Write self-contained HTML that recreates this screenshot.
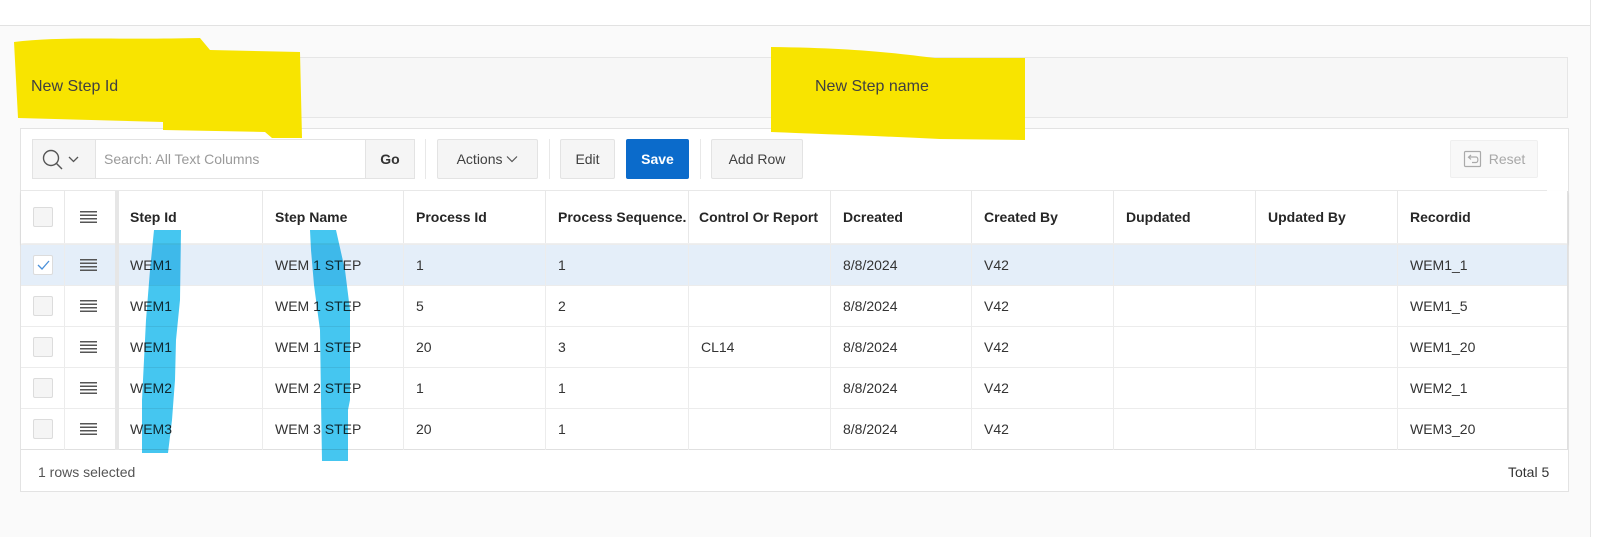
<!DOCTYPE html>
<html><head><meta charset="utf-8"><style>
*{box-sizing:border-box;margin:0;padding:0}
body{width:1600px;height:537px;background:#fafafa;font-family:"Liberation Sans",sans-serif;font-size:14px;color:#262626;position:relative;overflow:hidden}
.a{position:absolute}
.btn{position:absolute;top:139px;height:40px;border:1px solid #e3e3e3;background:#f5f5f5;border-radius:2px;display:flex;align-items:center;justify-content:center;font-size:14px;color:#404040}
.hd{position:absolute;top:191px;height:52px;font-weight:bold;font-size:14px;line-height:52px;color:#262626;padding-left:12px;border-left:1px solid #e8e8e8;white-space:nowrap;overflow:hidden}
.row{position:absolute;left:21px;width:1547px;height:41px;border-top:1px solid #ececec}
.c{position:absolute;top:0;height:41px;line-height:41px;padding-left:12px;border-left:1px solid #ececec;font-size:14px;color:#333}
.cb{position:absolute;left:12px;top:10px;width:20px;height:20px;border:1px solid #dcdcdc;border-radius:2px;background:#f5f5f5}
.ham{position:absolute;left:59px;top:14px;width:17px;height:12px;background:repeating-linear-gradient(#555 0 1.5px,transparent 1.5px 3.5px)}
</style></head><body>
<div class="a" style="left:0;top:0;width:1600px;height:26px;background:#fff;border-bottom:1px solid #e2e2e2"></div>
<div class="a" style="left:1590px;top:0;width:10px;height:537px;background:#fff;border-left:1px solid #e6e6e6"></div>

<div class="a" style="left:20px;top:57px;width:1548px;height:61px;border:1px solid #e6e6e6;background:#f7f7f7"></div>
<div class="a" style="left:20px;top:128px;width:1549px;height:364px;border:1px solid #e3e3e3;background:#fff"></div>

<svg class="a" style="left:0;top:0" width="1600" height="537">
<path d="M14 42 C60 36 120 40 200 38 L210 50 L300 52 L302 138 L272 138 L265 132 L163 130 L163 122 L18 118 Z" fill="#f8e400"/>
<path d="M771 47 C860 48 900 54 935 58 L1025 58 L1025 140 L940 139 C880 136 820 134 771 132 Z" fill="#f8e400"/>
</svg>
<div class="a" style="left:31px;top:78px;font-size:16px;color:#404040">New Step Id</div>
<div class="a" style="left:815px;top:78px;font-size:16px;color:#404040">New Step name</div>

<div class="a" style="left:32px;top:139px;width:383px;height:40px;border:1px solid #e3e3e3;background:#fff;border-radius:2px"></div>
<div class="a" style="left:32px;top:139px;width:64px;height:40px;background:#f5f5f5;border:1px solid #e3e3e3"></div>
<svg class="a" style="left:40px;top:148px" width="50" height="24"><circle cx="11" cy="10" r="7.5" fill="none" stroke="#555" stroke-width="1.4"/><path d="M16.5 15.5 L22 21" stroke="#555" stroke-width="1.4"/><path d="M29 9 L33.5 13.5 L38 9" fill="none" stroke="#555" stroke-width="1.3"/></svg>
<div class="a" style="left:104px;top:151px;font-size:14px;color:#9a9a9a">Search: All Text Columns</div>
<div class="a" style="left:365px;top:139px;width:50px;height:40px;background:#f5f5f5;border:1px solid #e3e3e3;font-weight:bold;font-size:14px;line-height:38px;text-align:center;color:#333">Go</div>
<div class="a" style="left:425px;top:139px;width:1px;height:40px;background:#e8e8e8"></div>
<div class="btn" style="left:437px;width:101px">Actions&nbsp;<svg width="12" height="8"><path d="M1 1.5 L6 6.5 L11 1.5" fill="none" stroke="#555" stroke-width="1.2"/></svg></div>
<div class="a" style="left:549px;top:139px;width:1px;height:40px;background:#e8e8e8"></div>
<div class="btn" style="left:560px;width:55px">Edit</div>
<div class="btn" style="left:626px;width:63px;background:#0b6bcb;border-color:#0b6bcb;color:#fff;font-weight:bold">Save</div>
<div class="a" style="left:700px;top:139px;width:1px;height:40px;background:#e8e8e8"></div>
<div class="btn" style="left:711px;width:92px">Add Row</div>
<div class="btn" style="left:1450px;width:88px;top:140px;height:38px;background:#f8f8f8;border-color:#efefef;color:#a8a8a8"><svg width="20" height="18" style="margin-right:6px"><rect x="1.5" y="1.5" width="16" height="15" rx="1" fill="none" stroke="#aaa" stroke-width="1.2"/><path d="M6 7 L13 7 C15.5 7 15.5 12.5 13 12.5 L9 12.5 M8 5 L5.5 7.2 L8 9.4" fill="none" stroke="#aaa" stroke-width="1.2"/></svg>Reset</div>

<div class="a" style="left:21px;top:190px;width:1526px;height:1px;background:#e8e8e8"></div>
<div class="a" style="left:21px;top:191px;width:1547px;height:52px;background:#fff;box-shadow:0 2px 3px rgba(0,0,0,.08)"></div>
<div class="a" style="left:33px;top:207px;width:20px;height:20px;border:1px solid #dcdcdc;border-radius:2px;background:#f5f5f5"></div>
<div class="a" style="left:64px;top:191px;width:1px;height:52px;background:#e8e8e8"></div>
<div class="a" style="left:80px;top:211px;width:17px;height:12px;background:repeating-linear-gradient(#555 0 1.5px,transparent 1.5px 3.5px)"></div>
<div class="hd" style="left:118px;width:144px;border-left:none">Step Id</div>
<div class="hd" style="left:262px;width:141px">Step Name</div>
<div class="hd" style="left:403px;width:142px">Process Id</div>
<div class="hd" style="left:545px;width:143px">Process Sequence.</div>
<div class="hd" style="left:688px;width:142px;padding-left:10px">Control Or Report</div>
<div class="hd" style="left:830px;width:141px">Dcreated</div>
<div class="hd" style="left:971px;width:142px">Created By</div>
<div class="hd" style="left:1113px;width:142px">Dupdated</div>
<div class="hd" style="left:1255px;width:142px">Updated By</div>
<div class="hd" style="left:1397px;width:171px">Recordid</div>

<div class="row" style="top:244px;background:#e4eef9">
<div class="cb" style="background:#fff"><svg width="18" height="18" style="position:absolute;left:0;top:0"><path d="M4 9 L8 13 L15 5" fill="none" stroke="#4a90d9" stroke-width="1.3"/></svg></div><div class="ham"></div>
<div class="c" style="left:43px;width:52px;padding:0"></div>
<div class="c" style="left:97px;width:144px;border-left:none">WEM1</div><div class="c" style="left:241px;width:141px">WEM 1 STEP</div><div class="c" style="left:382px;width:142px">1</div><div class="c" style="left:524px;width:143px">1</div><div class="c" style="left:667px;width:142px"></div><div class="c" style="left:809px;width:141px">8/8/2024</div><div class="c" style="left:950px;width:142px">V42</div><div class="c" style="left:1092px;width:142px"></div><div class="c" style="left:1234px;width:142px"></div><div class="c" style="left:1376px;width:171px">WEM1_1</div></div>
<div class="row" style="top:285px"><div class="cb"></div><div class="ham"></div><div class="c" style="left:43px;width:52px;padding:0"></div>
<div class="c" style="left:97px;width:144px;border-left:none">WEM1</div><div class="c" style="left:241px;width:141px">WEM 1 STEP</div><div class="c" style="left:382px;width:142px">5</div><div class="c" style="left:524px;width:143px">2</div><div class="c" style="left:667px;width:142px"></div><div class="c" style="left:809px;width:141px">8/8/2024</div><div class="c" style="left:950px;width:142px">V42</div><div class="c" style="left:1092px;width:142px"></div><div class="c" style="left:1234px;width:142px"></div><div class="c" style="left:1376px;width:171px">WEM1_5</div></div>
<div class="row" style="top:326px"><div class="cb"></div><div class="ham"></div><div class="c" style="left:43px;width:52px;padding:0"></div>
<div class="c" style="left:97px;width:144px;border-left:none">WEM1</div><div class="c" style="left:241px;width:141px">WEM 1 STEP</div><div class="c" style="left:382px;width:142px">20</div><div class="c" style="left:524px;width:143px">3</div><div class="c" style="left:667px;width:142px">CL14</div><div class="c" style="left:809px;width:141px">8/8/2024</div><div class="c" style="left:950px;width:142px">V42</div><div class="c" style="left:1092px;width:142px"></div><div class="c" style="left:1234px;width:142px"></div><div class="c" style="left:1376px;width:171px">WEM1_20</div></div>
<div class="row" style="top:367px"><div class="cb"></div><div class="ham"></div><div class="c" style="left:43px;width:52px;padding:0"></div>
<div class="c" style="left:97px;width:144px;border-left:none">WEM2</div><div class="c" style="left:241px;width:141px">WEM 2 STEP</div><div class="c" style="left:382px;width:142px">1</div><div class="c" style="left:524px;width:143px">1</div><div class="c" style="left:667px;width:142px"></div><div class="c" style="left:809px;width:141px">8/8/2024</div><div class="c" style="left:950px;width:142px">V42</div><div class="c" style="left:1092px;width:142px"></div><div class="c" style="left:1234px;width:142px"></div><div class="c" style="left:1376px;width:171px">WEM2_1</div></div>
<div class="row" style="top:408px;border-bottom:1px solid #e0e0e0;height:42px"><div class="cb"></div><div class="ham"></div><div class="c" style="left:43px;width:52px;padding:0"></div>
<div class="c" style="left:97px;width:144px;border-left:none">WEM3</div><div class="c" style="left:241px;width:141px">WEM 3 STEP</div><div class="c" style="left:382px;width:142px">20</div><div class="c" style="left:524px;width:143px">1</div><div class="c" style="left:667px;width:142px"></div><div class="c" style="left:809px;width:141px">8/8/2024</div><div class="c" style="left:950px;width:142px">V42</div><div class="c" style="left:1092px;width:142px"></div><div class="c" style="left:1234px;width:142px"></div><div class="c" style="left:1376px;width:171px">WEM3_20</div></div>
<div class="a" style="left:115px;top:191px;width:4px;height:259px;background:#e6e6e6"></div>
<div class="a" style="left:1567px;top:191px;width:1px;height:259px;background:#e0e0e0"></div>

<div class="a" style="left:38px;top:464px;font-size:14px;color:#555">1 rows selected</div>
<div class="a" style="left:1508px;top:464px;font-size:14px;color:#333">Total 5</div>

<svg class="a" style="left:0;top:0;mix-blend-mode:multiply" width="1600" height="537">
<path d="M154 230 L181 230 L180 300 L176 340 L175 380 L172 420 L168 453 L142 453 L142 400 L144 360 L146 320 L150 270 Z" fill="#45c6f0"/>
<path d="M310 230 L336 230 L345 270 L350 310 L350 400 L348 410 L348 461 L322 461 L321 400 L320 330 L314 285 L311 250 Z" fill="#45c6f0"/>
</svg>
</body></html>
